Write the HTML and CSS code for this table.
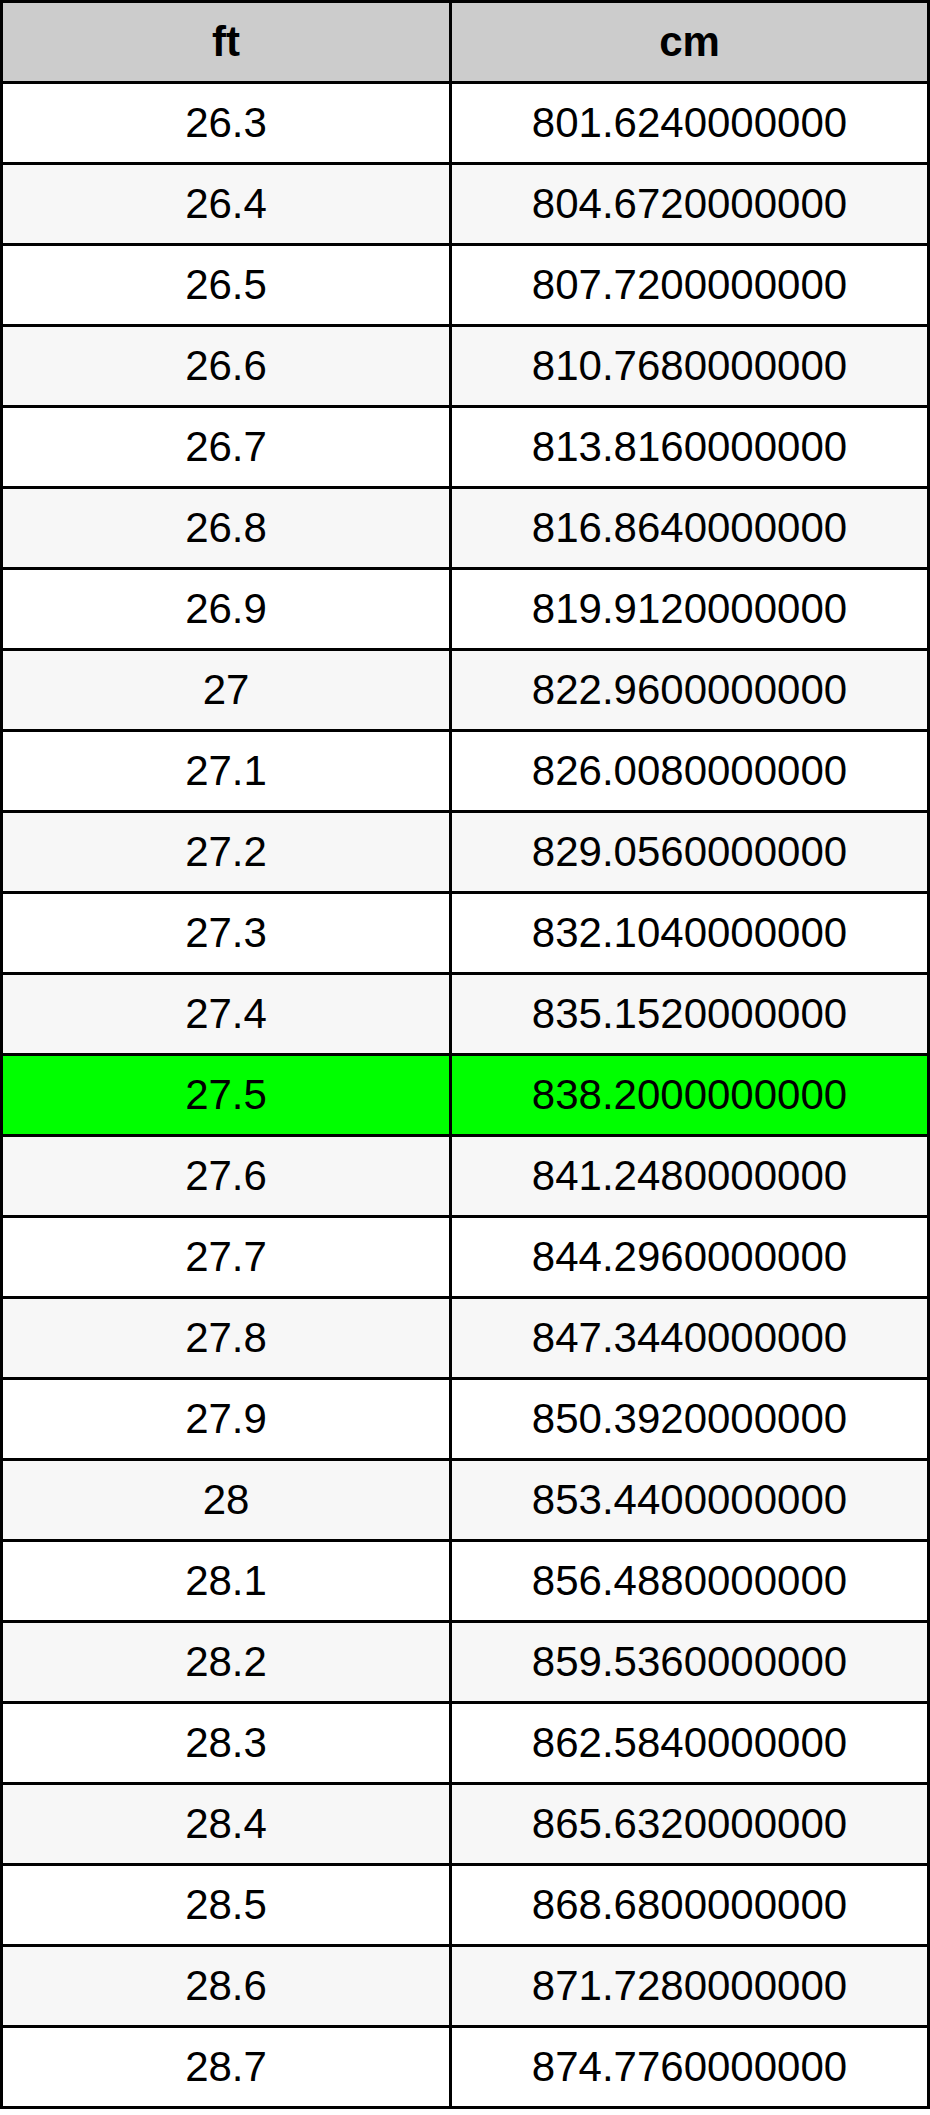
FILE: index.html
```html
<!DOCTYPE html>
<html>
<head>
<meta charset="utf-8">
<title>ft to cm</title>
<link rel="stylesheet" href="styles.css">
</head>
<body>
<table class="conv">
<colgroup><col class="c1"><col class="c2"></colgroup>
<thead>
<tr><th>ft</th><th>cm</th></tr>
</thead>
<tbody>
<tr><td>26.3</td><td>801.6240000000</td></tr>
<tr><td>26.4</td><td>804.6720000000</td></tr>
<tr><td>26.5</td><td>807.7200000000</td></tr>
<tr><td>26.6</td><td>810.7680000000</td></tr>
<tr><td>26.7</td><td>813.8160000000</td></tr>
<tr><td>26.8</td><td>816.8640000000</td></tr>
<tr><td>26.9</td><td>819.9120000000</td></tr>
<tr><td>27</td><td>822.9600000000</td></tr>
<tr><td>27.1</td><td>826.0080000000</td></tr>
<tr><td>27.2</td><td>829.0560000000</td></tr>
<tr><td>27.3</td><td>832.1040000000</td></tr>
<tr><td>27.4</td><td>835.1520000000</td></tr>
<tr class="hl"><td>27.5</td><td>838.2000000000</td></tr>
<tr><td>27.6</td><td>841.2480000000</td></tr>
<tr><td>27.7</td><td>844.2960000000</td></tr>
<tr><td>27.8</td><td>847.3440000000</td></tr>
<tr><td>27.9</td><td>850.3920000000</td></tr>
<tr><td>28</td><td>853.4400000000</td></tr>
<tr><td>28.1</td><td>856.4880000000</td></tr>
<tr><td>28.2</td><td>859.5360000000</td></tr>
<tr><td>28.3</td><td>862.5840000000</td></tr>
<tr><td>28.4</td><td>865.6320000000</td></tr>
<tr><td>28.5</td><td>868.6800000000</td></tr>
<tr><td>28.6</td><td>871.7280000000</td></tr>
<tr><td>28.7</td><td>874.7760000000</td></tr>
</tbody>
</table>
</body>
</html>
```
FILE: styles.css
```css
html, body {
  margin: 0;
  padding: 0;
  background: #ffffff;
}

.conv {
  border-collapse: separate;
  border-spacing: 0;
  table-layout: fixed;
  width: 930px;
  border-top: 3px solid #000;
  border-left: 3px solid #000;
  font-family: "Liberation Sans", Arial, sans-serif;
  font-size: 42px;
  color: #000;
}

.c1 { width: 449px; }
.c2 { width: 478px; }

.conv th,
.conv td {
  box-sizing: border-box;
  height: 81px;
  padding: 0;
  border-right: 3px solid #000;
  border-bottom: 3px solid #000;
  text-align: center;
  vertical-align: middle;
  line-height: 1;
}

.conv th {
  background: #cccccc;
  font-weight: bold;
}

.conv tbody tr:nth-child(odd) td { background: #ffffff; }
.conv tbody tr:nth-child(even) td { background: #f7f7f7; }
.conv tbody tr.hl td { background: #00ff00; }
```
